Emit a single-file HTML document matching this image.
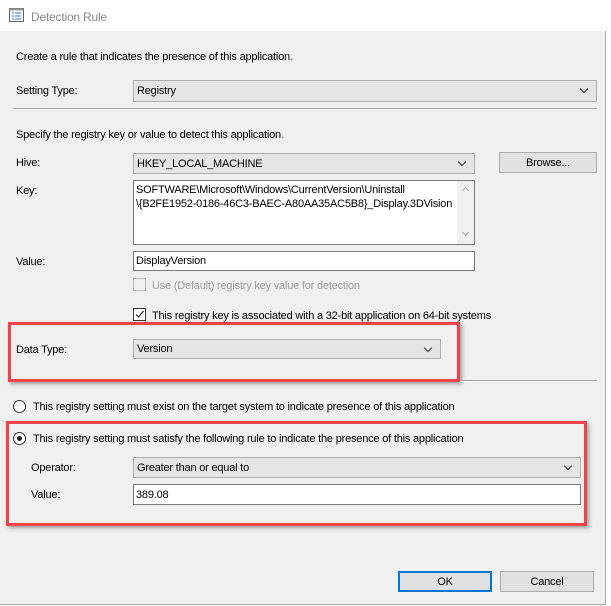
<!DOCTYPE html>
<html><head><meta charset="utf-8"><style>
*{box-sizing:border-box;margin:0;padding:0}
body{width:611px;height:606px;background:#fff;font-family:"Liberation Sans",sans-serif;font-size:11px;letter-spacing:-0.2px;color:#000;position:relative;overflow:hidden}
.win{position:absolute;left:0;top:0;width:606px;height:605px;background:#f0f0f0;border-right:1px solid #aaa;border-bottom:1px solid #aaa}
.title{position:absolute;left:0;top:0;width:606px;height:31px;background:#fff}
.a{position:absolute;white-space:nowrap;margin-top:1px}
.combo{position:absolute;background:#e5e5e5;border:1px solid #adadad;padding:4px 0 0 3px;white-space:nowrap}
.combo::after{content:"";position:absolute;right:9px;top:5px;width:5px;height:5px;border-right:1px solid #333;border-bottom:1px solid #333;transform:rotate(45deg)}
.tb{position:absolute;background:#fff;border:1px solid #7a7a7a;padding:4px 0 0 2px;white-space:nowrap}
.btn{position:absolute;background:#e1e1e1;border:1px solid #adadad;text-align:center;padding-top:4px}
.red{position:absolute;border:3px solid #f0424a;box-shadow:2px 2px 4px rgba(0,0,0,.35)}
.sep{position:absolute;height:2px;border-top:1px solid #a0a0a0;border-bottom:1px solid #fff}
.cb{position:absolute;width:13px;height:13px;border:1px solid #333;background:#fff}
.radio{position:absolute;width:13px;height:13px;border:1px solid #333;border-radius:50%;background:#fff}
</style></head><body>
<div class="win">
<div class="title">
<svg class="a" style="left:9px;top:7px" width="16" height="15" viewBox="0 0 16 15"><rect x="0.5" y="0.5" width="14" height="13" fill="#fff" stroke="#666"/><rect x="0.5" y="0.5" width="14" height="2" fill="#999"/><path d="M3 5h2M6 5h6M3 8h2M6 8h6M3 11h2M6 11h6" stroke="#2a7ad3"/></svg>
<div class="a" style="left:31px;top:9px;color:#888;font-size:12px">Detection Rule</div>
</div>
<div class="a" style="left:16px;top:50px">Create a rule that indicates the presence of this application.</div>
<div class="a" style="left:16px;top:84px">Setting Type:</div>
<div class="combo" style="left:133px;top:80px;width:464px;height:22px">Registry</div>
<div class="sep" style="left:13px;top:108px;width:584px"></div>
<div class="a" style="left:16px;top:128px">Specify the registry key or value to detect this application.</div>
<div class="a" style="left:16px;top:156px">Hive:</div>
<div class="combo" style="left:133px;top:153px;width:342px;height:21px">HKEY_LOCAL_MACHINE</div>
<div class="btn" style="left:499px;top:152px;width:98px;height:21px">Browse...</div>
<div class="a" style="left:16px;top:184px">Key:</div>
<div class="tb" style="left:133px;top:180px;width:342px;height:65px;line-height:14px;padding-top:2px">SOFTWARE\Microsoft\Windows\CurrentVersion\Uninstall<br>\{B2FE1952-0186-46C3-BAEC-A80AA35AC5B8}_Display.3DVision
<div style="position:absolute;right:0;top:0;width:17px;height:63px;background:#f0f0f0"><div style="position:absolute;left:6px;top:7px;width:5px;height:5px;border-left:1px solid #aaa;border-top:1px solid #aaa;transform:rotate(45deg)"></div><div style="position:absolute;left:6px;top:49px;width:5px;height:5px;border-right:1px solid #aaa;border-bottom:1px solid #aaa;transform:rotate(45deg)"></div></div></div>
<div class="a" style="left:16px;top:255px">Value:</div>
<div class="tb" style="left:133px;top:251px;width:342px;height:20px;padding-top:3px">DisplayVersion</div>
<div class="cb" style="left:133px;top:278px;border-color:#bcbcbc;background:#f0f0f0"></div>
<div class="a" style="left:152px;top:279px;color:#a0a0a0">Use (Default) registry key value for detection</div>
<div class="cb" style="left:133px;top:308px"><svg width="11" height="11" style="position:absolute;left:0;top:0"><path d="M2 5.5l2.5 2.5 5-6" fill="none" stroke="#222" stroke-width="1.2"/></svg></div>
<div class="a" style="left:152px;top:309px">This registry key is associated with a 32-bit application on 64-bit systems</div>
<div class="a" style="left:16px;top:343px">Data Type:</div>
<div class="combo" style="left:133px;top:339px;width:308px;height:20px;padding-top:3px">Version</div>
<div class="red" style="left:8px;top:322px;width:452px;height:60px"></div>
<div class="sep" style="left:460px;top:380px;width:137px"></div>
<div class="radio" style="left:13px;top:400px"></div>
<div class="a" style="left:33px;top:400px">This registry setting must exist on the target system to indicate presence of this application</div>
<div class="radio" style="left:13px;top:432px"><div style="position:absolute;left:3px;top:3px;width:5px;height:5px;border-radius:50%;background:#222"></div></div>
<div class="a" style="left:33px;top:432px">This registry setting must satisfy the following rule to indicate the presence of this application</div>
<div class="a" style="left:31px;top:461px">Operator:</div>
<div class="combo" style="left:133px;top:457px;width:448px;height:21px">Greater than or equal to</div>
<div class="a" style="left:31px;top:488px">Value:</div>
<div class="tb" style="left:133px;top:484px;width:448px;height:21px">389.08</div>
<div class="red" style="left:6px;top:421px;width:581px;height:105px"></div>
<div class="btn" style="left:398px;top:571px;width:94px;height:21px;border:2px solid #0078d7;padding-top:3px">OK</div>
<div class="btn" style="left:500px;top:571px;width:94px;height:21px">Cancel</div>
</div>
</body></html>
